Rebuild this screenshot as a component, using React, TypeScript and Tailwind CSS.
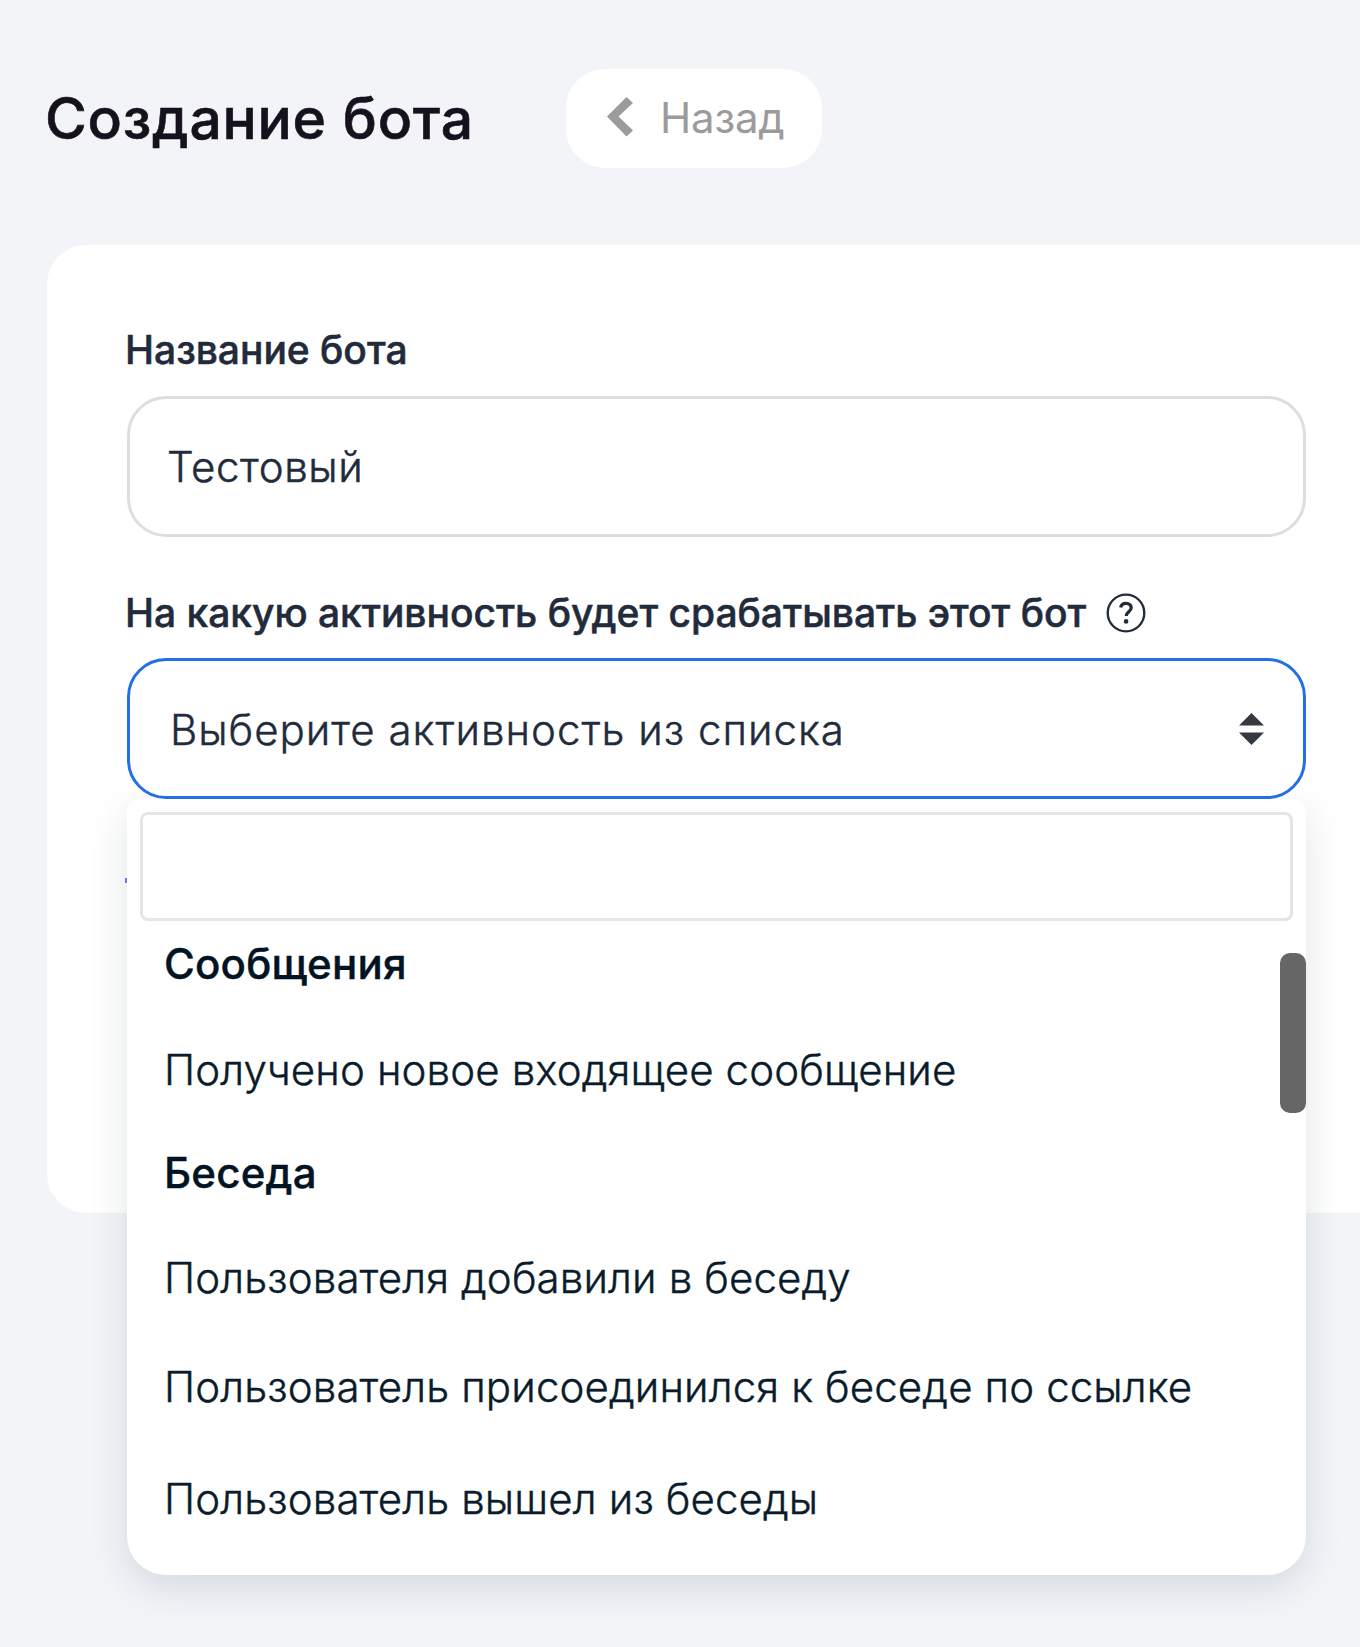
import { ReactNode } from 'react';

interface DropdownRow {
  label: string;
  group?: boolean;
  rowClass: string;
}

const rows: DropdownRow[] = [
  { label: 'Сообщения', group: true, rowClass: 'h-[104px]' },
  { label: 'Получено новое входящее сообщение', rowClass: 'h-[108px]' },
  { label: 'Беседа', group: true, rowClass: 'h-[98px]' },
  { label: 'Пользователя добавили в беседу', rowClass: 'h-[112px]' },
  { label: 'Пользователь присоединился к беседе по ссылке', rowClass: 'h-[106px]' },
  { label: 'Пользователь вышел из беседы', rowClass: 'h-[119px]' },
];

function FieldLabel({ children }: { children: ReactNode }) {
  return (
    <div className="-ml-0.5 flex h-10 items-center gap-5 text-[39px] leading-10 font-medium tracking-[-0.03px] whitespace-nowrap text-[#212b3b] [-webkit-text-stroke:0.5px_#212b3b]">
      {children}
    </div>
  );
}

function QuestionIcon() {
  return (
    <svg width="40" height="40" viewBox="0 0 40 40" fill="none" className="shrink-0">
      <circle cx="20" cy="20" r="18.3" stroke="#212b3b" strokeWidth="2.3" />
      <path
        d="M14.7 14.6c.4-2.8 2.5-4.3 5.3-4.3 3 0 5.2 1.7 5.2 4.4 0 4-5 4-5 8.3"
        stroke="#212b3b"
        strokeWidth="3.3"
      />
      <circle cx="20.1" cy="28.4" r="2.3" fill="#212b3b" />
    </svg>
  );
}

export default function App() {
  return (
    <div className="h-[1647px] w-[1360px] overflow-hidden bg-[#f2f4f8] pt-[69px] pl-[47px] font-['Inter',sans-serif]">
      <header className="flex h-[99px] items-center">
        <h1 className="w-[519px] text-[57px] leading-[60px] font-medium tracking-[0.75px] whitespace-nowrap text-[#15111d] [-webkit-text-stroke:0.6px_#15111d]">
          <span className="-ml-0.5">Создание бота</span>
        </h1>
        {/* The wide soft shadow falls over the form card below */}
        <button className="relative z-10 flex h-[99px] w-[256px] items-center rounded-[39px] bg-white pl-[41px] text-[42px] text-[#9b9b9b] shadow-[0_104px_140px_50px_rgba(0,0,0,0.009)]">
          <svg width="26" height="40" viewBox="0 0 26 40" className="mr-[27px] shrink-0 overflow-visible">
            <path d="M0 17.5 19.5 -2 26 4 11.5 17.5 26 31.5 19.5 37.5Z" fill="#9b9b9b" />
          </svg>
          <span className="-mt-0.5 tracking-[-0.2px]">Назад</span>
        </button>
      </header>

      <main className="mt-[77px] h-[968px] rounded-l-[39px] bg-white pt-[85px] pr-[54px] pl-20">
        <FieldLabel>Название бота</FieldLabel>
        <div className="mt-[26px] flex h-[141px] items-center rounded-[39px] border-[3px] border-[#dedede] pl-[37px] text-[42px] font-light tracking-[0.6px] text-[#212b3b] [-webkit-text-stroke:0.5px_#212b3b]">
          Тестовый
        </div>

        <div className="mt-14">
          <FieldLabel>
            На какую активность будет срабатывать этот бот
            <QuestionIcon />
          </FieldLabel>
        </div>

        <div className="relative mt-[25px]">
          <div className="relative z-20 flex h-[141px] items-center justify-between rounded-[39px] border-[3px] border-[#246fe5] bg-white pr-[39px] pl-10 text-[42px] font-light tracking-[1px] text-[#212b3b] [-webkit-text-stroke:0.4px_#212b3b]">
            <span className="pt-0.5">Выберите активность из списка</span>
            <svg width="25" height="32" viewBox="0 0 25 32" fill="#343a40">
              <path d="M12.5 0 25 12.5H0zM12.5 32 25 19.5H0z" />
            </svg>
          </div>

          {/* Dropdown */}
          <div className="absolute top-[141px] left-0 z-10 h-[776px] w-full rounded-t-[13px] rounded-b-[39px] bg-white px-[13px] pt-[13px] shadow-[0_13px_39px_rgba(0,40,40,0.12)]">
            <div className="h-[109px] rounded-lg border-[3px] border-[#e5e5e5]" />
            <div className="-mt-[10px] pl-6 text-[42px] text-[#0a1c2b]">
              {rows.map((row) => (
                <div
                  key={row.label}
                  className={`flex items-center whitespace-nowrap ${row.rowClass} ${
                    row.group
                      ? 'font-medium tracking-[0.2px] text-[#021423] [-webkit-text-stroke:0.4px_#021423]'
                      : 'font-light tracking-[0.13px] [-webkit-text-stroke:0.4px_#0a1c2b]'
                  }`}
                >
                  {row.label}
                </div>
              ))}
            </div>
            <div className="absolute top-[154px] right-0 h-[160px] w-[26px] rounded-[10px] bg-[#666]" />
          </div>
        </div>

        {/* Edge of the link that the open dropdown covers */}
        <div className="mt-[79px] -ml-0.5 h-[5px] w-3 bg-[#8577ea]" />
      </main>
    </div>
  );
}
